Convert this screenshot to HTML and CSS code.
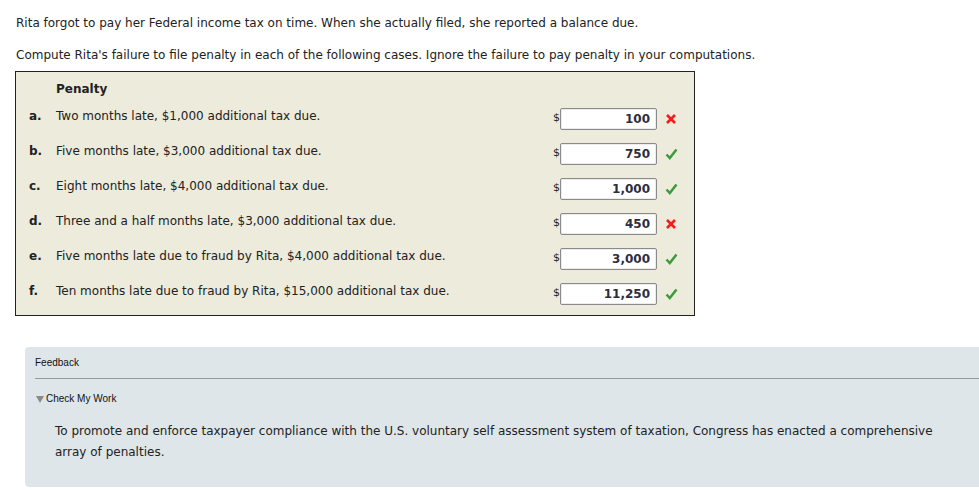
FILE: index.html
```html
<!DOCTYPE html>
<html>
<head>
<meta charset="utf-8">
<link rel="stylesheet" href="styles.css">
</head>
<body>
<div class="page">
  <p class="intro">Rita forgot to pay her Federal income tax on time. When she actually filed, she reported a balance due.</p>
  <p class="intro second">Compute Rita's failure to file penalty in each of the following cases. Ignore the failure to pay penalty in your computations.</p>
  <div class="qbox">
    <div class="head">Penalty</div>
    <div class="row">
      <span class="lbl">a.</span><span class="desc">Two months late, $1,000 additional tax due.</span>
      <span class="dollar">$</span><span class="inp">100</span><span class="mark"><svg width="12" height="12" viewBox="0 0 12 12"><path d="M2 2 L10 10 M10 2 L2 10" stroke="#f41c1c" stroke-width="2.6"/></svg></span>
    </div>
    <div class="row">
      <span class="lbl">b.</span><span class="desc">Five months late, $3,000 additional tax due.</span>
      <span class="dollar">$</span><span class="inp">750</span><span class="mark"><svg width="13" height="12" viewBox="0 0 13 12"><path d="M1.5 6.5 L4.8 10 L11.5 1.5" fill="none" stroke="#3c9c3c" stroke-width="2.5"/></svg></span>
    </div>
    <div class="row">
      <span class="lbl">c.</span><span class="desc">Eight months late, $4,000 additional tax due.</span>
      <span class="dollar">$</span><span class="inp">1,000</span><span class="mark"><svg width="13" height="12" viewBox="0 0 13 12"><path d="M1.5 6.5 L4.8 10 L11.5 1.5" fill="none" stroke="#3c9c3c" stroke-width="2.5"/></svg></span>
    </div>
    <div class="row">
      <span class="lbl">d.</span><span class="desc">Three and a half months late, $3,000 additional tax due.</span>
      <span class="dollar">$</span><span class="inp">450</span><span class="mark"><svg width="12" height="12" viewBox="0 0 12 12"><path d="M2 2 L10 10 M10 2 L2 10" stroke="#f41c1c" stroke-width="2.6"/></svg></span>
    </div>
    <div class="row">
      <span class="lbl">e.</span><span class="desc">Five months late due to fraud by Rita, $4,000 additional tax due.</span>
      <span class="dollar">$</span><span class="inp">3,000</span><span class="mark"><svg width="13" height="12" viewBox="0 0 13 12"><path d="M1.5 6.5 L4.8 10 L11.5 1.5" fill="none" stroke="#3c9c3c" stroke-width="2.5"/></svg></span>
    </div>
    <div class="row">
      <span class="lbl">f.</span><span class="desc">Ten months late due to fraud by Rita, $15,000 additional tax due.</span>
      <span class="dollar">$</span><span class="inp">11,250</span><span class="mark"><svg width="13" height="12" viewBox="0 0 13 12"><path d="M1.5 6.5 L4.8 10 L11.5 1.5" fill="none" stroke="#3c9c3c" stroke-width="2.5"/></svg></span>
    </div>
  </div>
  <div class="feedback">
    <div class="fb-title">Feedback</div>
    <div class="fb-check"><svg class="tri" width="8" height="8" viewBox="0 0 8 8"><path d="M0 1 L8 1 L4 8 Z" fill="#8a8a8a"/></svg>Check My Work</div>
    <p class="fb-text">To promote and enforce taxpayer compliance with the U.S. voluntary self assessment system of taxation, Congress has enacted a comprehensive array of penalties.</p>
  </div>
</div>
</body>
</html>
```

FILE: styles.css
```css
html, body {
  margin: 0;
  padding: 0;
  background: #ffffff;
}
.page {
  font-family: "DejaVu Sans", Verdana, sans-serif;
  font-size: 12px;
  color: #222;
  padding: 15px 0 0 16px;
}
.intro {
  margin: 0;
  line-height: 17px;
}
.intro.second {
  margin-top: 15px;
}
.qbox {
  margin: 7px 0 0 -1px;
  width: 678px;
  height: 243px;
  border: 1px solid #222;
  background: #ecebdc;
  color: #222;
}
.head {
  font-weight: bold;
  padding: 9px 0 0 40px;
  line-height: 17px;
  height: 17px;
}
.row {
  display: flex;
  align-items: flex-start;
  height: 35px;
}
.lbl {
  font-weight: bold;
  width: 27px;
  padding-left: 13px;
  margin-top: 10px;
  line-height: 17px;
}
.desc {
  width: 497px;
  margin-top: 10px;
  line-height: 17px;
}
.dollar {
  width: 7px;
  font-size: 11px;
  margin-top: 14px;
  line-height: 12px;
}
.inp {
  box-sizing: border-box;
  width: 97px;
  height: 22px;
  margin-top: 10px;
  border: 1px solid #8a8a8a;
  border-radius: 2px;
  background: #fff;
  text-align: right;
  padding-right: 6px;
  font-weight: bold;
  line-height: 20px;
  color: #2d2d40;
  box-shadow: inset 0 0 0 1px #ececec;
}
.mark {
  margin: 15px 0 0 8px;
  display: flex;
  line-height: 0;
}
.feedback {
  margin: 31px 0 0 9px;
  background: #dfe6e9;
  border-radius: 4px 0 0 4px;
  height: 140px;
  padding: 0 0 0 10px;
  font-family: "Liberation Sans", Arial, sans-serif;
  font-size: 10px;
  color: #111;
}
.fb-title {
  padding-top: 10px;
  height: 21px;
  line-height: 11px;
  border-bottom: 1px solid #9a9a9a;
}
.fb-check {
  margin-top: 14px;
  line-height: 11px;
  display: flex;
  align-items: center;
}
.tri {
  margin: 0 2px 0 1px;
}
.fb-text {
  margin: 17px 40px 0 20px;
  font-family: "DejaVu Sans", Verdana, sans-serif;
  font-size: 12px;
  line-height: 21px;
  color: #222;
}
```
